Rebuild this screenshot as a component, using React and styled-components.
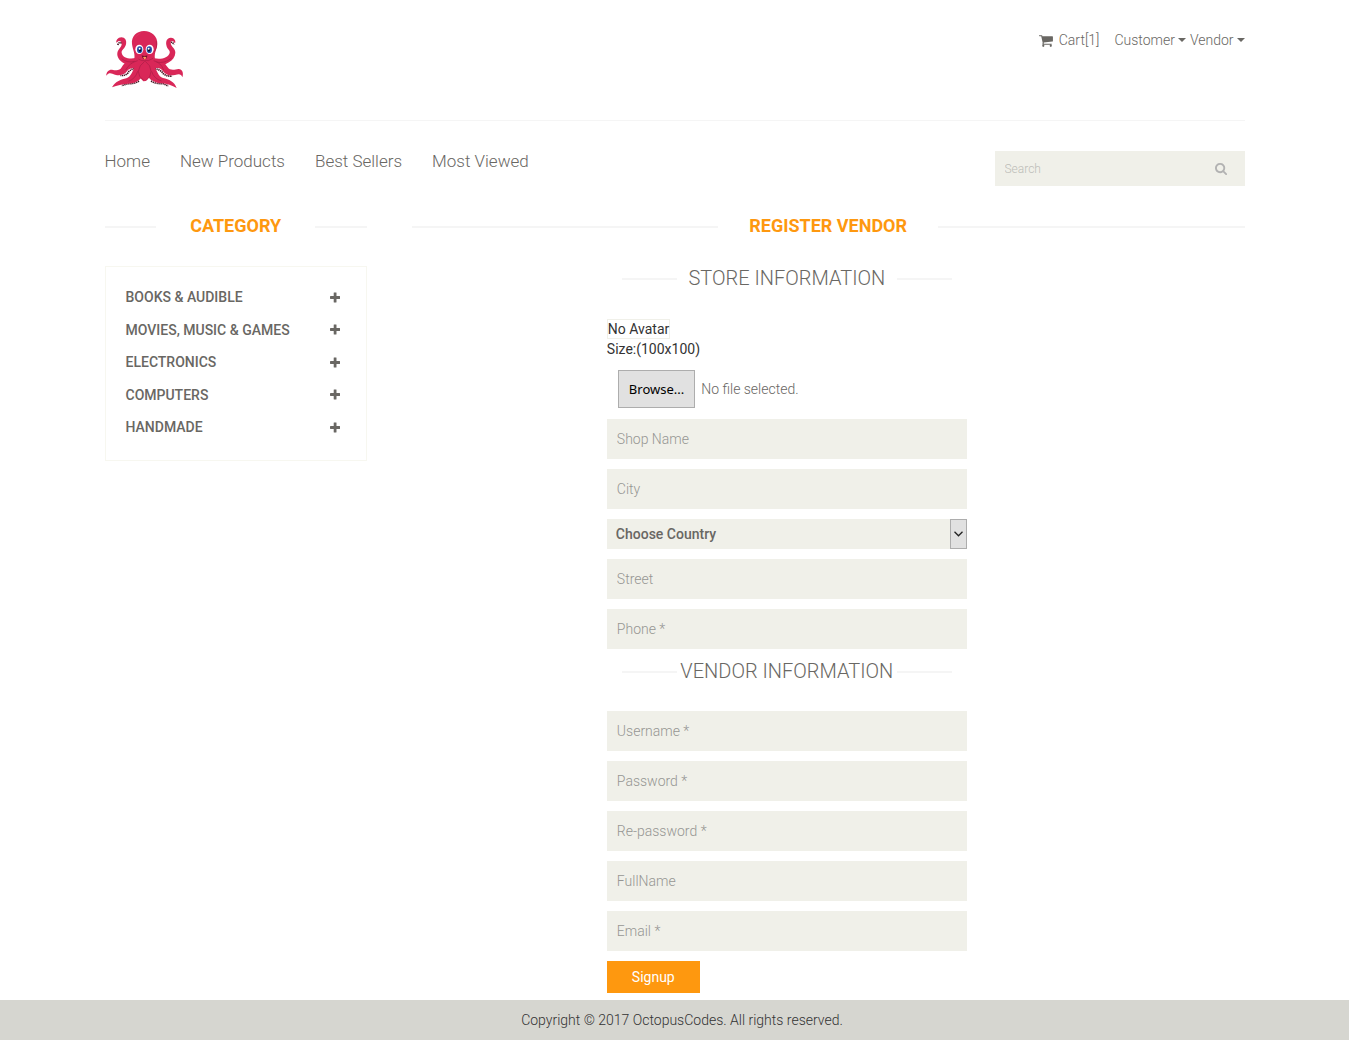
import React from "react";
import styled, { createGlobalStyle } from "styled-components";

const GlobalStyle = createGlobalStyle`
  *, *::before, *::after { box-sizing: border-box; }
  body {
    margin: 0;
    background: #fff;
    color: #333;
    font-family: Roboto, "Liberation Sans", sans-serif;
    font-size: 14px;
    line-height: 20px;
  }
  button, input, select { font: inherit; border-radius: 0; }
  a { color: inherit; text-decoration: none; }
  ul { margin: 0; padding: 0; list-style: none; }
`;

const Container = styled.div`
  max-width: 1170px;
  margin: 0 auto;
  padding: 0 15px;
`;

const Header = styled.header`
  display: flex;
  justify-content: space-between;
  align-items: flex-start;
  padding: 20px 0;
  border-bottom: 1px solid #f5f5f5;
`;

const LogoLink = styled.a`
  display: block;
  height: 80px;
`;

const UserMenu = styled.nav`
  display: flex;
  align-items: center;
  gap: 4px;
  padding-top: 10px;
  color: #696763;
  font-weight: 300;
`;

const CartLink = styled.a`
  display: flex;
  align-items: center;
  gap: 6px;
  margin-right: 11px;
`;

const MenuButton = styled.button`
  display: flex;
  align-items: center;
  gap: 3px;
  padding: 0;
  border: 0;
  background: none;
  color: inherit;
  cursor: pointer;
`;

const Caret = styled.span`
  border: 4px solid transparent;
  border-top-color: #696763;
  border-bottom: 0;
`;

const NavBar = styled.div`
  display: flex;
  justify-content: space-between;
  align-items: flex-start;
  padding-top: 30px;
`;

const MainNav = styled.nav`
  display: flex;
  gap: 30px;
  color: #696763;
  font-size: 17px;
  font-weight: 300;
`;

const SearchBox = styled.form`
  display: flex;
  align-items: center;
  width: 250px;
  height: 35px;
  padding: 0 16px 0 10px;
  background: #f0f0e9;
`;

const SearchInput = styled.input`
  flex: 1;
  min-width: 0;
  padding: 0;
  border: 0;
  outline: 0;
  background: none;
  font-size: 12px;
  font-weight: 300;
  &::placeholder { color: #bdbdb8; opacity: 1; }
`;

const SearchButton = styled.button`
  display: flex;
  padding: 0;
  width: 14px;
  border: 0;
  background: none;
  color: #b2b2b2;
`;

const Columns = styled.div`
  display: grid;
  grid-template-columns: 23fr 73fr;
  gap: 45px;
  padding-top: 30px;
`;

const Title = styled.h2`
  display: flex;
  justify-content: space-between;
  align-items: center;
  height: 20px;
  margin: 0 0 30px;
  color: #fe980f;
  font-size: 18px;
  font-weight: 700;
  text-transform: uppercase;
  &::before, &::after {
    content: "";
    width: ${(p) => p.$line};
    height: 2px;
    margin-top: 2px;
    background: #f5f5f5;
  }
`;

const SubTitle = styled(Title)`
  padding: 0 15px;
  height: 24px;
  color: #696763;
  font-size: 20px;
  font-weight: 300;
`;

const Panel = styled.div`
  padding: 20px 26px 23px 20px;
  border: 1px solid #f7f7f0;
`;

const CategoryList = styled.ul`
  display: flex;
  flex-direction: column;
  justify-content: space-between;
  height: 150px;
  color: #696763;
  font-weight: 500;
  text-transform: uppercase;
`;

const CategoryLink = styled.a`
  display: flex;
  justify-content: space-between;
  align-items: center;
`;

const RegisterForm = styled.form`
  display: flex;
  flex-direction: column;
  align-items: flex-start;
  width: 360px;
  margin-left: 195px;
`;

const Section = styled.section`
  display: flex;
  flex-direction: column;
  align-items: stretch;
  gap: 10px;
  width: 100%;
  margin-bottom: 10px;
  ${SubTitle} { margin-bottom: 18px; }
`;

const Avatar = styled.div`
  padding-top: 1px;
`;

const NoAvatar = styled.div`
  width: max-content;
  border: 1px solid #f0f0e9;
  line-height: 18px;
`;

const FileRow = styled.div`
  display: flex;
  align-items: center;
  gap: 6px;
  height: 40px;
  padding-left: 11px;
  color: #696763;
  font-weight: 300;
`;

const FileInput = styled.input`
  position: absolute;
  width: 1px;
  height: 1px;
  opacity: 0;
`;

const FileLabel = styled.label`
  padding: 8px 10px;
  border: 1px solid #adadad;
  background: #e1e1e1;
  color: #000;
  font-family: "Noto Sans", "Open Sans", sans-serif;
  font-size: 13px;
  font-weight: 400;
`;

const Field = styled.input`
  width: 100%;
  height: 40px;
  padding: 0 10px;
  border: 0;
  outline: 0;
  background: #f0f0e9;
  color: #696763;
  font-weight: 300;
  &::placeholder { color: #969693; opacity: 1; }
`;

const SelectWrap = styled.div`
  position: relative;
  height: 30px;
`;

const Select = styled.select`
  display: block;
  width: 100%;
  height: 30px;
  padding: 0 26px 0 9px;
  border: 0;
  appearance: none;
  background: #f0f0e9;
  color: #696763;
  font-weight: 500;
`;

const SelectArrow = styled.span`
  position: absolute;
  inset: 0 0 0 auto;
  display: flex;
  align-items: center;
  justify-content: center;
  width: 17px;
  border: 1px solid #adadad;
  background: #e1e1e1;
  pointer-events: none;
`;

const SignupButton = styled.button`
  height: 32px;
  padding: 0 25px;
  border: 0;
  background: #fe980f;
  color: #fff;
  cursor: pointer;
`;

const Footer = styled.footer`
  margin-top: 7px;
  padding: 10px 0 10px 15px;
  background: #d6d6d0;
  text-align: center;
  font-weight: 300;
`;

const glyphs = {
  cart: {
    width: 1664,
    d: "M640 1536q0 52-38 90t-90 38-90-38-38-90 38-90 90-38 90 38 38 90zm896 0q0 52-38 90t-90 38-90-38-38-90 38-90 90-38 90 38 38 90zm128-1088v512q0 24-16.5 42.5t-40.5 21.5l-1044 122q13 60 13 70 0 16-24 64h920q26 0 45 19t19 45-19 45-45 19h-1024q-26 0-45-19t-19-45q0-11 8-31.5t16-36 21.5-40 15.5-29.5l-177-823h-204q-26 0-45-19t-19-45 19-45 45-19h256q16 0 28.5 6.5t19.5 15.5 13 24.5 8 26 5.5 29.5 4.5 26h1201q26 0 45 19t19 45z",
  },
  search: {
    width: 1664,
    d: "M1152 832q0-185-131.5-316.5t-316.5-131.5-316.5 131.5-131.5 316.5 131.5 316.5 316.5 131.5 316.5-131.5 131.5-316.5zm512 832q0 52-38 90t-90 38q-54 0-90-38l-343-342q-179 124-399 124-143 0-273.5-55.5t-225-150-150-225-55.5-273.5 55.5-273.5 150-225 225-150 273.5-55.5 273.5 55.5 225 150 150 225 55.5 273.5q0 220-124 399l343 343q37 37 37 90z",
  },
  plus: {
    width: 1408,
    d: "M1408 800v192q0 40-28 68t-68 28h-416v416q0 40-28 68t-68 28h-192q-40 0-68-28t-28-68v-416h-416q-40 0-68-28t-28-68v-192q0-40 28-68t68-28h416v-416q0-40 28-68t68-28h192q40 0 68 28t28 68v416h416q40 0 68 28t28 68z",
  },
};

function Icon({ name, size = 13 }) {
  const g = glyphs[name];
  return (
    <svg height={size} width={(size * g.width) / 1792} viewBox={`0 0 ${g.width} 1792`} fill="currentColor" aria-hidden="true">
      <path d={g.d} />
    </svg>
  );
}

function Octopus() {
  return (
    <svg width="80" height="80" viewBox="30 0 240 240" role="img" aria-label="Octopus">
      <g fill="none" stroke="#40101f" strokeWidth="5" strokeDasharray="4 2">
        <path d="M119 146Q104 148 98 160Q90 168 76 166M178 146Q196 148 204 160Q214 170 232 168" />
        <path d="M132 183Q118 192 98 191L80 197M168 183Q182 192 204 191L220 198" />
        <path d="M80 70Q72 63 68 76M222 70Q231 62 237 74" />
      </g>
      <g fill="#d92758">
        <path d="M126 138C98 140 64 124 67 99C69 86 81 83 80 70C79 61 70 61 65 68C61 63 69 52 79 52C90 52 96 62 93 73C90 87 79 89 80 99C83 114 103 118 122 114z" />
        <path d="M174 138C204 140 240 125 241 98C242 85 228 81 227 69C226 60 235 61 240 70C244 62 237 52 227 53C216 54 212 63 214 75C216 88 226 90 224 99C220 114 198 119 178 115z" />
        <path d="M124 116C100 117 87 128 80 142C74 154 61 151 51 149C42 148 33 156 34 167C43 155 50 161 60 164C81 169 91 161 99 150C107 142 119 146 132 144z" />
        <path d="M174 116C200 118 211 130 218 142C225 153 240 149 250 147C261 146 267 158 262 172C258 160 251 162 240 165C218 169 209 160 200 149C191 141 179 146 166 143z" />
        <path d="M126 128C112 154 108 170 94 175C79 179 61 184 51 202C68 196 81 192 99 191C127 190 143 177 150 150z" />
        <path d="M172 126C186 151 190 171 204 174C222 177 239 186 245 204C231 198 216 190 200 190C174 188 157 176 148 150z" />
        <path d="M111 72C108 49 126 33 147 33C171 33 188 50 187 72C186 89 177 96 180 118C184 142 171 165 153 183L145 184C125 164 113 142 118 118C121 98 113 90 111 72z" />
      </g>
      <g fill="none" stroke="#a91d46" strokeWidth="2">
        <path d="M130 117Q141 124 148 122Q160 125 174 115M149 124Q132 136 130 154Q130 170 146 181M151 124Q168 136 168 154Q168 170 154 181M128 122Q104 128 92 150M176 122Q198 128 206 150M128 154Q122 176 100 184M170 154Q176 176 200 183" />
        <path d="M184 64Q188 82 178 96M80 116Q97 130 119 124M230 114Q208 132 184 126" />
      </g>
      <path fill="#ea5079" opacity=".4" d="M119 57Q125 41 139 39Q127 45 119 57z" />
      <g>
        <ellipse cx="133" cy="88" rx="12" ry="14" fill="#fff" />
        <ellipse cx="164" cy="88" rx="12" ry="14" fill="#fff" />
        <ellipse cx="134" cy="89" rx="8" ry="10" fill="#2b55ae" />
        <ellipse cx="163" cy="89" rx="8" ry="10" fill="#2b55ae" />
        <ellipse cx="135" cy="89" rx="4" ry="6" fill="#080b20" />
        <ellipse cx="162" cy="89" rx="4" ry="6" fill="#080b20" />
        <circle cx="134" cy="86" r="3" fill="#fff" />
        <circle cx="161" cy="86" r="3" fill="#fff" />
      </g>
      <path fill="#721329" d="M140 106Q149 110 157 106Q156 118 149 118Q142 118 140 106z" />
      <path fill="#ff9b64" d="M144 112Q149 109 154 112Q152 119 148 118z" />
    </svg>
  );
}

const navLinks = ["Home", "New Products", "Best Sellers", "Most Viewed"];
const categories = ["Books & Audible", "Movies, Music & Games", "Electronics", "Computers", "Handmade"];
const vendorFields = [
  ["Username *", "text"],
  ["Password *", "password"],
  ["Re-password *", "password"],
  ["FullName", "text"],
  ["Email *", "email"],
];

function TextField({ label, type = "text" }) {
  return <Field type={type} placeholder={label} aria-label={label} />;
}

export default function App() {
  return (
    <>
      <GlobalStyle />
      <Container>
        <Header>
          <LogoLink href="#"><Octopus /></LogoLink>
          <UserMenu>
            <CartLink href="#"><Icon name="cart" size={15} />Cart[1]</CartLink>
            <MenuButton type="button">Customer<Caret /></MenuButton>
            <MenuButton type="button">Vendor<Caret /></MenuButton>
          </UserMenu>
        </Header>
        <NavBar>
          <MainNav>
            {navLinks.map((n) => <a href="#" key={n}>{n}</a>)}
          </MainNav>
          <SearchBox>
            <SearchInput type="text" placeholder="Search" aria-label="Search" />
            <SearchButton type="button" aria-label="Search"><Icon name="search" /></SearchButton>
          </SearchBox>
        </NavBar>
        <Columns>
          <aside>
            <Title $line="calc(20% - 1px)">Category</Title>
            <Panel>
              <CategoryList>
                {categories.map((c) => (
                  <li key={c}><CategoryLink href="#">{c}<Icon name="plus" /></CategoryLink></li>
                ))}
              </CategoryList>
            </Panel>
          </aside>
          <main>
            <Title $line="calc(37% - 2px)">Register Vendor</Title>
            <RegisterForm>
              <Section>
                <SubTitle as="h3" $line="55px">Store Information</SubTitle>
                <Avatar>
                  <NoAvatar>No Avatar</NoAvatar>
                  Size:(100x100)
                </Avatar>
                <FileRow>
                  <FileInput id="avatar" type="file" />
                  <FileLabel htmlFor="avatar">Browse...</FileLabel>
                  <span>No file selected.</span>
                </FileRow>
                <TextField label="Shop Name" />
                <TextField label="City" />
                <SelectWrap>
                  <Select aria-label="Country" defaultValue="">
                    <option value="">Choose Country</option>
                  </Select>
                  <SelectArrow>
                    <svg width="9" height="6" viewBox="0 0 9 6" fill="none" stroke="#222" strokeWidth="1.3" aria-hidden="true">
                      <path d="M.5 .8 4.5 4.8 8.5 .8" />
                    </svg>
                  </SelectArrow>
                </SelectWrap>
                <TextField label="Street" />
                <TextField label="Phone *" />
              </Section>
              <Section>
                <SubTitle as="h3" $line="55px">Vendor Information</SubTitle>
                {vendorFields.map(([label, type]) => <TextField key={label} label={label} type={type} />)}
              </Section>
              <SignupButton type="button">Signup</SignupButton>
            </RegisterForm>
          </main>
        </Columns>
      </Container>
      <Footer>Copyright © 2017 OctopusCodes. All rights reserved.</Footer>
    </>
  );
}
